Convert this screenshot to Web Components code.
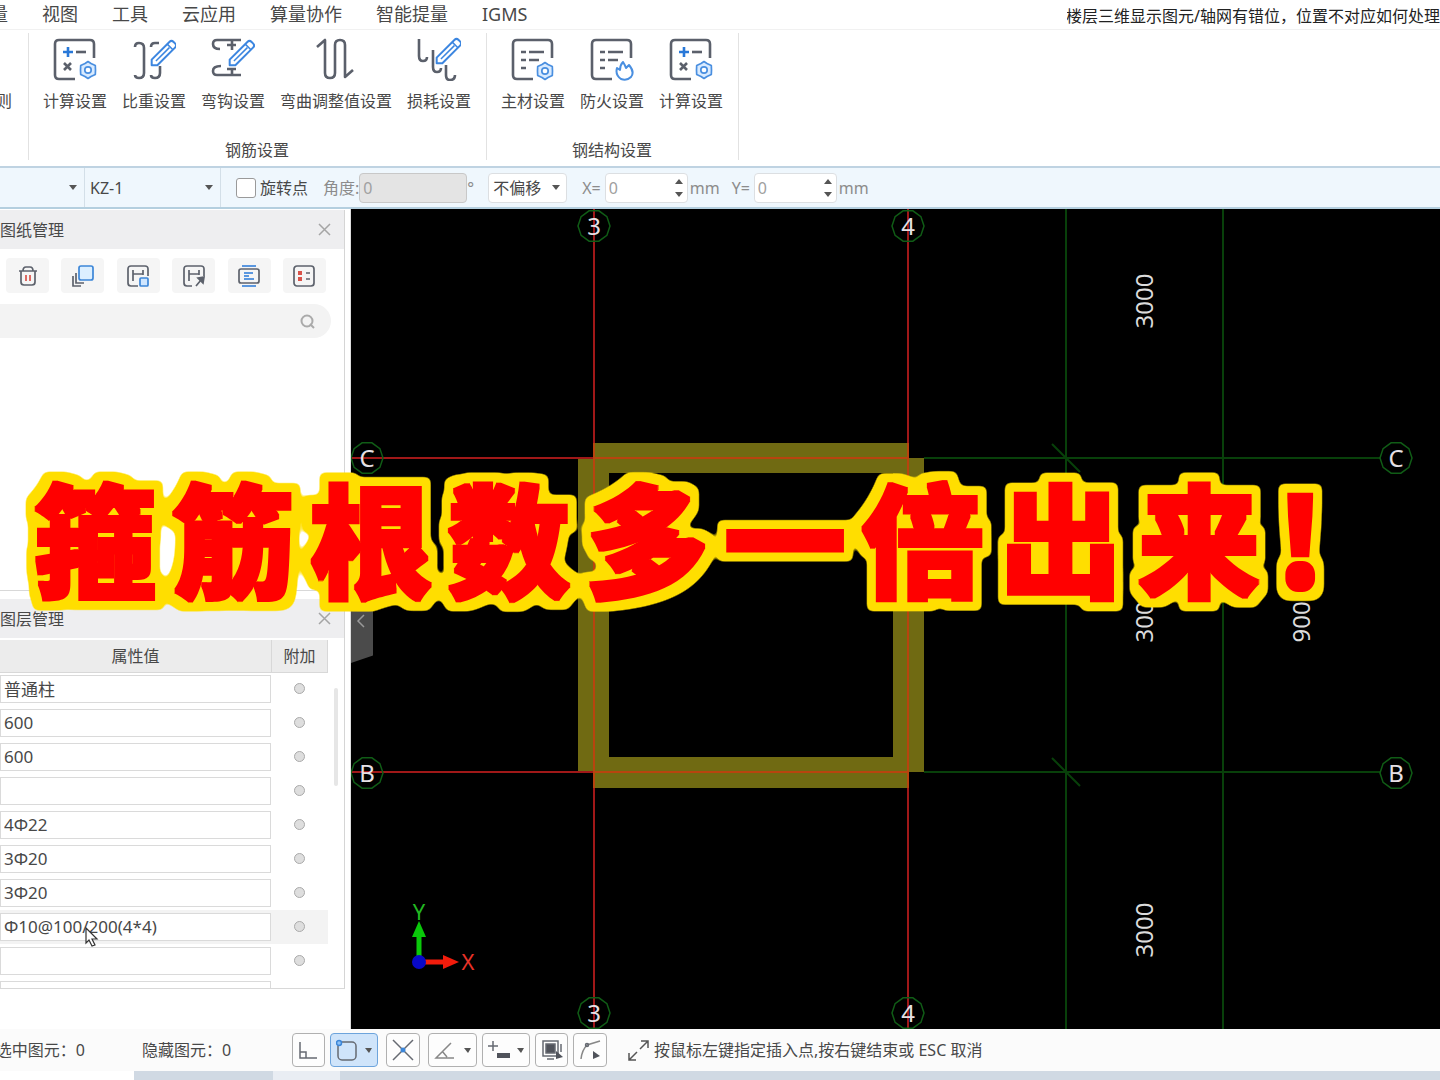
<!DOCTYPE html>
<html lang="zh-CN">
<head>
<meta charset="utf-8">
<title>KZ-1</title>
<style>
html,body{margin:0;height:100%}
body{font:16px/20px "Noto Sans","Noto Sans CJK SC",sans-serif;color:#484848;background:#fff;overflow:hidden}
</style>
</head>
<body>
<cad-app></cad-app>
<script>
const define = (name, html, setup) => {
  const tpl = document.createElement('template');
  tpl.innerHTML = '<style>*{box-sizing:border-box}button,input,select{font:inherit;color:inherit;margin:0}button{cursor:pointer}svg{display:block;flex:none}</style>' + html;
  customElements.define(name, class extends HTMLElement {
    constructor() {
      super();
      this.attachShadow({mode: 'open'}).append(tpl.content.cloneNode(true));
    }
    connectedCallback() { if (setup) setup(this, this.shadowRoot); }
  });
};

const gear = (x, y) => `<g transform="translate(${x} ${y})" fill="#d9ebff" stroke="#4a8fe0" stroke-width="1.7" stroke-linejoin="round"><path d="M0-8.500L3-6.500L7.300-4.500L7.500 0L7.300 4.500L3 6.500L0 8.500L-3 6.500L-7.300 4.500L-7.500 0L-7.300-4.500L-3-6.500Z"/><circle r="3.200" fill="#fff"/></g>`;
const pencil = (x, y) => `<g transform="translate(${x} ${y}) rotate(45)" fill="#fff" stroke="#3c86e0" stroke-width="2" stroke-linejoin="round"><path d="M-4-13Q-4-16-1-16H1Q4-16 4-13V12L0 16L-4 12Z"/><path d="M-4-10H4M0-9V10" fill="none" stroke-width="1.500"/></g>`;
const card = '<path d="M41 21V7Q41 3 37 3H6Q2 3 2 7V38Q2 42 6 42H22"/>';
const ribbonIcons = {
  calc: card + '<path d="M23 15H33"/><path d="M11 26L18 33M18 26L11 33"/><path d="M15 10V20M10 15H20" stroke="#2878d8"/>' + gear(35, 33),
  weight: '<path d="M3 10Q3 6 7 6Q12 6 12 11V36Q12 41 7 41Q3 41 3 38M19 10Q19 6 23 6H27M28 29V36Q28 41 23 41Q19 41 19 38"/>' + pencil(31, 17),
  hook: '<path d="M30 3H6Q2 3 2 7Q2 12 9 12M30 38H6Q2 38 2 34Q2 29 10 29M16 8H25M21 3V13M16 32H25M21 32V38"/>' + pencil(30, 17),
  bend: '<path d="M3 10L11 3V36Q11 41 16 41Q21 41 21 36V8Q21 3 26 3Q31 3 31 8V40L39 33"/>',
  loss: '<path d="M2 2V19Q2 24 6 24Q10 24 10 20M16 13V30Q16 35 20 35Q24 35 24 31M29 28V38Q29 43 33 43Q38 43 38 38"/>' + pencil(31, 15),
  main: card + '<path d="M10 15H15M18 15H33M10 23H15M18 23H28M10 31H15"/>' + gear(34, 34),
  fire: card + '<path d="M10 15H15M18 15H33M10 23H15M18 23H28M10 31H15"/><path d="M33 25Q35 28 36 31L39 28Q45 35 41 40Q37 44 31 42Q25 38 27 31L30 33Q30 28 33 25Z" fill="#fff" stroke="#4a8fe0" stroke-width="2"/>'
};

define('ribbon-tool', `<style>
:host{display:block}
button{display:flex;flex-direction:column;align-items:center;gap:10px;border:0;background:none;padding:0;white-space:nowrap}
</style><button type="button"><svg width="44" height="44" viewBox="0 0 44 44" fill="none" stroke="#5b606b" stroke-width="2.600" stroke-linejoin="round"></svg><slot></slot></button>`,
(el, root) => { root.querySelector('svg').innerHTML = ribbonIcons[el.getAttribute('icon')]; });

define('ribbon-group', `<style>
:host{display:flex;flex-direction:column;justify-content:space-between;align-items:center;border-right:1px solid #e2e2e2;padding:4px 15px 0 14px}
.tools{display:flex;gap:15px}
</style><div class="tools"><slot></slot></div><span></span>`,
(el, root) => { root.querySelector('span').textContent = el.getAttribute('caption'); });

define('app-menu', `<style>
:host{display:flex;justify-content:space-between;height:30px;border-bottom:1px solid #f1f1f1;font-size:18px;line-height:28px;white-space:nowrap;overflow:hidden}
nav{display:flex;gap:34px}
a{color:inherit;text-decoration:none}
.cut{width:8px;display:flex;justify-content:flex-end}
.news{width:373px;display:flex;justify-content:flex-end;overflow:hidden;font-size:16px;line-height:32px;color:#222}
</style><nav><a class="cut" href="#">量</a><a href="#">视图</a><a href="#">工具</a><a href="#">云应用</a><a href="#">算量协作</a><a href="#">智能提量</a><a href="#">IGMS</a></nav>
<div class="news"><span>楼层三维显示图元/轴网有错位，位置不对应如何处理</span></div>`);

define('app-ribbon', `<style>
:host{display:flex;height:136px;padding:3px 0 6px;font-size:16px;line-height:20px}
.rest{width:29px;border-right:1px solid #e2e2e2;padding-top:58px;overflow:hidden}
.rest span{display:flex;justify-content:flex-end;width:12px}
</style><div class="rest"><span>则</span></div>
<ribbon-group caption="钢筋设置"><ribbon-tool icon="calc">计算设置</ribbon-tool><ribbon-tool icon="weight">比重设置</ribbon-tool><ribbon-tool icon="hook">弯钩设置</ribbon-tool><ribbon-tool icon="bend">弯曲调整值设置</ribbon-tool><ribbon-tool icon="loss">损耗设置</ribbon-tool></ribbon-group>
<ribbon-group caption="钢结构设置"><ribbon-tool icon="main">主材设置</ribbon-tool><ribbon-tool icon="fire">防火设置</ribbon-tool><ribbon-tool icon="calc">计算设置</ribbon-tool></ribbon-group>`);

define('option-bar', `<style>
:host{display:flex;align-items:center;height:43px;background:#eff7fd;border-top:2px solid #bfd3e2;border-bottom:2px solid #b4cfdf}
.combo{display:flex;align-items:center;height:100%;border-right:1px solid #d3dfe8;padding-right:7px}
select{appearance:none;border:0;background:none;flex:1;min-width:0;height:30px;padding:0;outline:0}
.a{width:85px}.b{width:136px;padding-left:5px}
label{display:flex;align-items:center;white-space:nowrap}
.rot{margin-left:15px;gap:4px}
.rot input{appearance:none;width:20px;height:20px;border:1px solid #9a9a9a;border-radius:3px;background:#fff}
.mute{color:#8c8c8c}
.mute input{min-width:0;height:30px;border:1px solid #dcdfe2;border-radius:4px;background:#fff;padding:0 3px;color:#a0a0a0;outline:0}
.angle{margin-left:15px}
.angle input{width:108px;background:#e4e4e4;border-color:#c8c8c8}
.offset{display:flex;align-items:center;width:79px;height:30px;margin:0 15px 0 14px;border:1px solid #dcdfe2;border-radius:4px;background:#fff;padding:0 6px 0 4px}
.spin{display:flex;align-items:center;width:83px;height:30px;border:1px solid #dcdfe2;border-radius:4px;background:#fff;padding-right:3px;margin:0 2px 0 4px}
.mute .spin input{flex:1;border:0;height:26px}
.num{margin-right:12px}
</style>
<div class="combo a"><select aria-label="类别"><option></option></select><svg width="8" height="5"><path d="M0 0H8L4 5Z" fill="#555"/></svg></div>
<div class="combo b"><select aria-label="构件"><option>KZ-1</option></select><svg width="8" height="5"><path d="M0 0H8L4 5Z" fill="#555"/></svg></div>
<label class="rot"><input type="checkbox">旋转点</label>
<label class="mute angle">角度:<input value="0" disabled>°</label>
<div class="offset"><select aria-label="偏移"><option>不偏移</option></select><svg width="8" height="5"><path d="M0 0H8L4 5Z" fill="#555"/></svg></div>
<label class="mute num">X=<span class="spin"><input value="0"><svg width="10" height="18"><path d="M1 5L5 0L9 5ZM1 13L5 18L9 13Z" fill="#555"/></svg></span>mm</label>
<label class="mute num">Y=<span class="spin"><input value="0"><svg width="10" height="18"><path d="M1 5L5 0L9 5ZM1 13L5 18L9 13Z" fill="#555"/></svg></span>mm</label>`);

define('side-panel', `<style>
:host{display:flex;flex-direction:column;border-right:1px solid #d5d5d5;border-bottom:1px solid #d8d8d8;overflow:hidden}
header{display:flex;align-items:center;justify-content:space-between;height:39px;flex:none;background:#eeeef0;padding-right:13px}
button{border:0;background:none;padding:0}
</style><header><span></span><button type="button" aria-label="关闭"><svg width="13" height="13" stroke="#a5a5a5" stroke-width="1.500"><path d="M1 1L12 12M12 1L1 12"/></svg></button></header><slot></slot>`,
(el, root) => { root.querySelector('span').textContent = el.getAttribute('caption'); });

define('drawing-tools', `<style>
:host{display:block}
.row{display:flex;justify-content:space-between;margin:9px 18px 11px 6px}
button{display:flex;align-items:center;justify-content:center;width:43px;height:35px;border:0;border-radius:4px;background:#f5f5f5;padding:0}
.search{display:flex;align-items:center;height:34px;margin-right:13px;border-radius:0 17px 17px 0;background:#f3f3f3;padding-right:16px}
input{flex:1;min-width:0;border:0;background:none;outline:0}
</style><div class="row"></div><label class="search"><input type="search" aria-label="搜索"><svg width="15" height="15" fill="none" stroke="#aaa" stroke-width="2"><circle cx="7" cy="7" r="5.500"/><path d="M10 10L14 14"/></svg></label>`,
(el, root) => {
  const icons = [
    ['删除', '<path d="M2 6H20M4 6V17Q4 20 7 20H15Q18 20 18 17V6M6 6Q6 2 9 2H13Q16 2 16 6"/><path d="M9 10V16M13 10V16" stroke="#d9534a"/>'],
    ['复制', '<path d="M4 8V18H12M1 11V21H9"/><rect x="7" y="1" width="14" height="14" rx="2" fill="#dcefff" stroke="#3c86d8"/>'],
    ['定位', '<path d="M21 11V4Q21 1 18 1H4Q1 1 1 4V18Q1 21 4 21H11M6 5V16M6 9H16M16 5V10"/><rect x="13" y="13" width="8" height="8" rx="1" fill="#cfe6ff" stroke="#3c86d8"/>'],
    ['识别', '<path d="M21 11V4Q21 1 18 1H4Q1 1 1 4V18Q1 21 4 21H9M6 5V16M6 9H16M16 5V10M13 21L18 15"/><path d="M15 13L21 12L20 18Z" fill="#5d626c"/>'],
    ['图纸', '<rect x="1" y="4" width="20" height="14" rx="2"/><path d="M4 1H18M4 21H18M6 8H15M6 11H11M6 14H16" stroke="#2878d8"/>'],
    ['列表', '<rect x="1" y="1" width="20" height="20" rx="3"/><path d="M13 8H17M13 14H17"/><path d="M5 6H9V10H5ZM5 12H9V16H5Z" fill="#d9534a" stroke="none"/>']
  ];
  root.querySelector('.row').innerHTML = icons.map(([n, d]) => `<button type="button" aria-label="${n}"><svg width="22" height="22" fill="none" stroke="#5d626c" stroke-width="1.700">${d}</svg></button>`).join('');
});

define('property-table', `<style>
:host{display:flex;height:350px;padding-top:2px;overflow:hidden}
table{width:328px;border-collapse:collapse;table-layout:fixed;align-self:flex-start}
th{height:32px;font-weight:400;background:#ececec;border-right:1px solid #d8d8d8;border-bottom:1px solid #d8d8d8;padding:0}
th:last-child{width:56px}
td{height:34px;padding:0 0 1px;text-align:center}
td:first-child{padding-right:1px}
input[type=text]{display:block;width:100%;height:28px;border:1px solid #dadada;background:#fff;padding:0 3px;outline:0;font-size:17px}
input[type=checkbox]{appearance:none;display:block;margin:0 auto;width:11px;height:11px;border:1px solid #aaa;border-radius:50%;background:#dedede}
.on td{background:#f3f3f3}
.bar{width:4px;height:98px;margin:48px 0 0 6px;background:#e6e6e6;border-radius:2px}
</style><table><thead><tr><th>属性值</th><th>附加</th></tr></thead><tbody></tbody></table><div class="bar"></div>`,
(el, root) => {
  const values = ['普通柱', '600', '600', '', '4Φ22', '3Φ20', '3Φ20', 'Φ10@100/200(4*4)', '', ''];
  root.querySelector('tbody').innerHTML = values.map((v, i) => `<tr${i === 7 ? ' class="on"' : ''}><td><input type="text" aria-label="属性值" value="${v}"></td><td><input type="checkbox" aria-label="附加"></td></tr>`).join('');
});

define('cad-canvas', `<style>
:host{display:block;position:relative;background:#000;overflow:hidden}
svg{width:100%;height:100%;font-family:"Noto Sans",sans-serif;font-size:24px}
button{position:absolute;left:0;top:380px;width:22px;height:74px;border:0;padding:0 0 10px 5px;background:#4b4b4b;clip-path:polygon(0 0,100% 0,100% 90%,0 100%)}
button svg{width:9px;height:14px}
</style><svg fill="none"></svg><button type="button" aria-label="收起"><svg stroke="#999" stroke-width="1.500" fill="none"><path d="M8 1L2 7L8 13"/></svg></button>`,
(el, root) => {
  const bubble = (x, y, t) => {
    const pts = Array.from({length: 10}, (_, i) => { const a = i * Math.PI / 5; return (x + 16 * Math.cos(a)).toFixed(1) + ',' + (y + 16 * Math.sin(a)).toFixed(1); }).join(' ');
    return `<polygon points="${pts}" stroke="#105c16" stroke-width="1.500"/><text x="${x}" y="${y + 9}" text-anchor="middle" fill="#e6e0e6">${t}</text>`;
  };
  const dim = (x, y, t) => `<text transform="translate(${x} ${y}) rotate(-90)" text-anchor="middle" fill="#dcdcdc">${t}</text>`;
  root.querySelector('svg').innerHTML = `
  <path d="M243 234H557V264H243ZM243 548H557V579H243ZM227 249H258V563H227ZM542 249H573V563H542Z" fill="#706a12"/>
  <path d="M715 0V820M872 0V820M573 249H1029M573 563H1029M701 235L729 263M701 549L729 577" stroke="#08400a" stroke-width="2"/>
  <path d="M243 0V820M557 0V820M0 249H557M0 563H557" stroke="#a01818" stroke-width="2"/>
  <path d="M243 234V579M557 234V579M243 249H557M243 563H557" stroke="#b8440e" stroke-width="2"/>
  ${bubble(243, 17, '3')}${bubble(557, 17, '4')}${bubble(243, 804, '3')}${bubble(557, 804, '4')}
  ${bubble(16, 249, 'C')}${bubble(16, 564, 'B')}${bubble(1045, 249, 'C')}${bubble(1045, 564, 'B')}
  ${dim(802, 92, '3000')}${dim(802, 406, '3000')}${dim(802, 721, '3000')}${dim(959, 406, '9000')}
  <path d="M68 748V724" stroke="#0ac80a" stroke-width="5"/><path d="M68 712L75 728H61Z" fill="#0ac80a"/>
  <path d="M74 753H96" stroke="#f21c0c" stroke-width="5"/><path d="M108 753L92 746V760Z" fill="#f21c0c"/>
  <circle cx="68" cy="753" r="7" fill="#0808c8"/>
  <text x="68" y="711" text-anchor="middle" fill="#22b822" style="font-size:22px">Y</text>
  <text x="117" y="761" text-anchor="middle" fill="#e83228" style="font-size:22px">X</text>`;
});

define('status-bar', `<style>
:host{display:block;background:#fbfbfb}
.row{display:flex;align-items:center;height:42px;white-space:nowrap}
.sel{display:flex;justify-content:flex-end;width:85px;overflow:hidden}
.hid{margin-left:57px;width:150px}
.tools{display:flex;gap:5px}
button{display:flex;align-items:center;justify-content:space-between;height:34px;padding:0 5px;border:1px solid #b0b0b0;border-radius:4px;background:#fdfdfd}
button.on{background:#cfe4fa;border-color:#6da4dc}
.gap{margin-right:3px}
.hint{display:flex;align-items:center;gap:5px;margin-left:21px}
.strip{display:flex;height:9px;background:#d0d9e3}
.strip i{background:#fff;width:134px;margin-right:139px}
.strip b{background:#e9edf3;width:67px}
</style><div class="row"><span class="sel">选中图元：0</span><span class="hid">隐藏图元：0</span><div class="tools"></div>
<span class="hint"><svg width="21" height="21" fill="none" stroke="#555" stroke-width="1.500"><path d="M12 9L20 1M13 1H20V8M9 12L1 20M1 13V20H8"/></svg>按鼠标左键指定插入点,按右键结束或 ESC 取消</span></div><div class="strip"><i></i><b></b></div>`,
(el, root) => {
  const arrow = '<svg width="7" height="5"><path d="M0 0H7L4 5Z" fill="#555"/></svg>';
  const icons = [
    ['正交', 33, '', '<path d="M2 3V19H19M2 13H8V19"/>'],
    ['捕捉', 48, 'on gap', '<rect x="2" y="3" width="18" height="18" rx="4"/><circle cx="3" cy="4" r="2.500" fill="#8cc0f5" stroke="#3c86d8"/>'],
    ['交点', 34, 'gap', '<path d="M1 1L21 21M21 1L1 21"/><circle cx="11" cy="11" r="2.500" fill="#3c86d8" stroke="none"/>'],
    ['角度', 49, '', '<path d="M17 4L2 19H20M8 12L13 18" stroke="#888"/>'],
    ['输入', 48, '', '<path d="M5 2V12M0 7H10"/><path d="M9 14H22V19H9Z" fill="#50535b" stroke="none"/>'],
    ['图层', 33, '', '<rect x="2" y="2" width="15" height="15"/><path d="M5 5H14V14H5Z" fill="#50535b"/><path d="M20 5V13M6 20H13"/><path d="M15 12L22 18L15 20Z" fill="#50535b" stroke="none"/>'],
    ['折线', 34, '', '<path d="M2 20Q3 11 8 6L21 2" stroke="#888"/><circle cx="8" cy="6" r="1.500"/><path d="M14 12L21 17L14 20Z" fill="#50535b" stroke="none"/>']
  ];
  root.querySelector('.tools').innerHTML = icons.map(([n, w, c, d]) => `<button type="button" class="${c}" aria-label="${n}" style="width:${w}px"><svg width="22" height="22" fill="none" stroke="#666a72" stroke-width="1.500">${d}</svg>${w > 40 ? arrow : ''}</button>`).join('');
});

define('video-headline', `<style>
:host{display:block;position:absolute;left:0;right:0;top:460px;height:160px;pointer-events:none}
svg{width:100%;height:100%;font:900 122px "Noto Sans CJK SC",sans-serif}
text{fill:#f00;filter:url(#outline)}
</style><svg><defs><filter id="outline" filterUnits="userSpaceOnUse" x="0" y="0" width="1440" height="160" color-interpolation-filters="sRGB">
<feMorphology in="SourceGraphic" operator="dilate" radius="2" result="heavy"/>
<feMorphology in="SourceAlpha" operator="dilate" radius="11"/>
<feGaussianBlur stdDeviation="3"/>
<feComponentTransfer result="halo"><feFuncA type="linear" slope="6" intercept="-2.5"/></feComponentTransfer>
<feFlood flood-color="#ffde00"/><feComposite in2="halo" operator="in" result="yellow"/>
<feMerge><feMergeNode in="yellow"/><feMergeNode in="heavy"/></feMerge>
</filter></defs><text y="128"></text></svg>`,
(el, root) => {
  const text = root.querySelector('text');
  text.textContent = el.getAttribute('caption');
  text.setAttribute('x', Array.from(text.textContent, (_, i) => 34 + 138 * i).join(' '));
});

define('mouse-pointer', `<style>:host{display:block;position:absolute;left:84px;top:926px;pointer-events:none}</style>
<svg width="16" height="22"><path d="M2 2V17L5 14L8 20L11 19L8 13H13Z" fill="#fff" stroke="#333" stroke-width="1.200"/></svg>`);

define('cad-app', `<style>
:host{display:flex;flex-direction:column;height:100vh;position:relative;overflow:hidden}
main{display:flex;flex:1;min-height:0}
aside{display:flex;flex-direction:column;width:351px;padding:1px 5px 40px 0;gap:8px;border-right:1px solid #ddd}
.sheets{flex:1}
cad-canvas{flex:1;min-width:0}
</style>
<app-menu></app-menu><app-ribbon></app-ribbon><option-bar></option-bar>
<main><aside><side-panel class="sheets" caption="图纸管理"><drawing-tools></drawing-tools></side-panel><side-panel caption="图层管理"><property-table></property-table></side-panel></aside><cad-canvas></cad-canvas></main>
<status-bar></status-bar>
<mouse-pointer></mouse-pointer><video-headline caption="箍筋根数多一倍出来!"></video-headline>`);
</script>
</body>
</html>
